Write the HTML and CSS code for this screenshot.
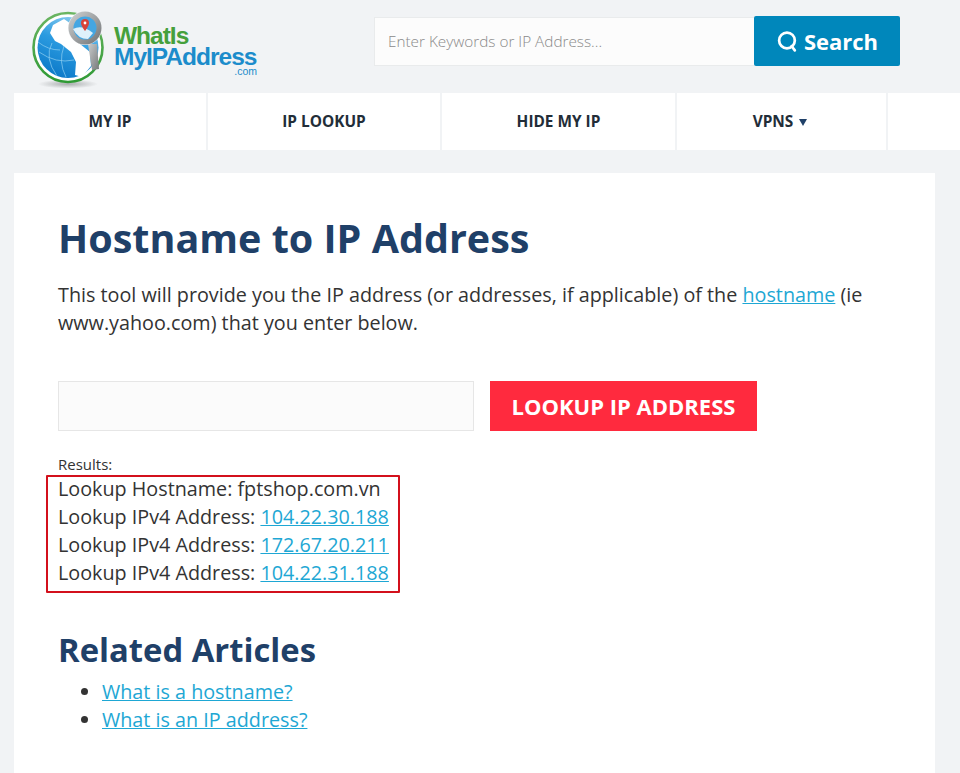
FILE: index.html
```html
<!DOCTYPE html>
<html lang="en">
<head>
<meta charset="utf-8">
<title>Hostname to IP Address</title>
<link rel="stylesheet" href="styles.css">
</head>
<body>
<header class="top">
  <a class="logo" href="#">
    <svg class="globe" width="80" height="82" viewBox="0 0 80 82">
      <defs>
        <linearGradient id="sea" x1="0.7" y1="0" x2="0.3" y2="1"><stop offset="0" stop-color="#8ccdf0"/><stop offset="0.45" stop-color="#2b9be0"/><stop offset="1" stop-color="#0b78c8"/></linearGradient>
        <linearGradient id="rim" x1="0" y1="0" x2="1" y2="1"><stop offset="0" stop-color="#c9cccd"/><stop offset="1" stop-color="#77797b"/></linearGradient>
        <linearGradient id="ring" x1="0" y1="0" x2="0" y2="1"><stop offset="0" stop-color="#6bb562"/><stop offset="1" stop-color="#2f9a35"/></linearGradient>
        <radialGradient id="shade" cx="0.5" cy="0.5" r="0.5"><stop offset="0" stop-color="#a9acae"/><stop offset="1" stop-color="#f1f3f5"/></radialGradient>
      </defs>
      <ellipse cx="40" cy="76" rx="30" ry="4.500" fill="url(#shade)"/>
      <circle cx="40" cy="39.500" r="34.500" fill="#fff"/>
      <circle cx="40" cy="39.500" r="30.500" fill="url(#sea)"/>
      <path d="M25 17 L36 11 L46 18 L46 30 L52 36 L62 44 L63 58 L54 69 L47 67 L48 54 L43 44 L33 36 L27 33 L22 25Z" fill="#fff"/>
      <path d="M11 44 Q28 56 46 52 M24 35 Q16 50 29 68 M36 38 Q30 54 38 69 M10 34 Q20 42 32 42" fill="none" stroke="#8fd0f2" stroke-width="0.700"/>
      <circle cx="40" cy="39.500" r="34.500" fill="none" stroke="url(#ring)" stroke-width="2.600"/>
      <path d="M60 36 L69 36 L71 61 L64 62Z" fill="url(#rim)"/>
      <circle cx="57" cy="20" r="17" fill="#f1f3f5"/>
      <circle cx="57" cy="20" r="14" fill="#45a6e2" stroke="url(#rim)" stroke-width="5"/>
      <path d="M45 21 Q54 16 65 25 L60 31 Q50 31 45 21Z" fill="#dff1fb"/>
      <path d="M57 11 a4 4 0 0 1 4 4 C61 18 57 23 57 23 C57 23 53 18 53 15 A4 4 0 0 1 57 11Z" fill="#d8433a"/>
      <circle cx="57" cy="15" r="1.400" fill="#fff"/>
    </svg>
    <span class="wordmark">
      <span class="wm-a">WhatIs</span>
      <span class="wm-b">MyIPAddress</span>
      <span class="wm-c">.com</span>
    </span>
  </a>
  <form class="search">
    <input class="search-input" type="text" placeholder="Enter Keywords or IP Address...">
    <button class="search-btn" type="button">
      <svg width="23" height="23" viewBox="0 0 22 22" fill="none" stroke="#fff" stroke-width="2.600" stroke-linecap="round"><circle cx="10.500" cy="10" r="7.500"/><path d="M15 15.500 L18 19.500"/></svg>
      <span>Search</span>
    </button>
  </form>
</header>
<nav class="nav">
  <a class="nav-item n1" href="#">MY IP</a>
  <a class="nav-item n2" href="#">IP LOOKUP</a>
  <a class="nav-item n3" href="#">HIDE MY IP</a>
  <a class="nav-item n4" href="#">VPNS <i class="caret"></i></a>
  <a class="nav-item n5" href="#"></a>
</nav>
<main class="card">
  <h1>Hostname to IP Address</h1>
  <p class="intro">This tool will provide you the IP address (or addresses, if applicable) of the <a href="#">hostname</a> (ie www.yahoo.com) that you enter below.</p>
  <form class="lookup">
    <input class="lookup-input" type="text">
    <button class="lookup-btn" type="button">LOOKUP IP ADDRESS</button>
  </form>
  <div class="results-label">Results:</div>
  <div class="results">
    <div class="highlight"></div>
    <div>Lookup Hostname: fptshop.com.vn</div>
    <div>Lookup IPv4 Address: <a href="#">104.22.30.188</a></div>
    <div>Lookup IPv4 Address: <a href="#">172.67.20.211</a></div>
    <div>Lookup IPv4 Address: <a href="#">104.22.31.188</a></div>
  </div>
  <h2>Related Articles</h2>
  <ul class="related">
    <li><a href="#">What is a hostname?</a></li>
    <li><a href="#">What is an IP address?</a></li>
  </ul>
</main>
</body>
</html>
```
FILE: styles.css
```css
* { box-sizing: border-box; }
html, body { margin: 0; height: 773px; overflow: hidden; }
body { background: #f1f3f5; font-family: "Open Sans", sans-serif; color: #333; }
a { color: #1ea7d4; }

.top { display: flex; height: 93px; padding-left: 28px; }
.logo { display: flex; width: 346px; padding-top: 8px; text-decoration: none; align-items: flex-start; }
.globe { flex: none; }
.wordmark { display: flex; flex-direction: column; width: 143px; margin-left: 6px; padding-top: 18px; font-family: "Liberation Sans", sans-serif; font-weight: 700; letter-spacing: -1px; }
.wm-a { color: #45a03c; font-size: 24.500px; line-height: 20px; }
.wm-b { color: #1c8ccb; font-size: 24.500px; line-height: 21px; }
.wm-c { color: #1c8ccb; font-size: 10.500px; line-height: 8px; font-weight: 400; text-align: right; letter-spacing: 0; }

.search { display: flex; padding-top: 16px; height: 66px; }
.search-input { width: 380px; margin-top: 1px; height: 49px; border: 1px solid #e9ebec; border-right: 0; background: #fcfcfc; padding: 0 13px 2px; font: 300 15.300px "Open Sans", sans-serif; outline: none; }
.search-input::placeholder { color: #8a8a8a; }
.search-btn { display: flex; align-items: center; justify-content: center; gap: 5px; width: 146px; height: 50px; border: 0; border-radius: 2px; background: #0087bb; color: #fff; font: 700 22px "Open Sans", sans-serif; padding: 0; }

.nav { display: flex; gap: 2px; height: 57px; margin-left: 14px; overflow: hidden; }
.nav-item { display: flex; align-items: center; justify-content: center; background: #fff; color: #222d38; font-weight: 700; font-size: 15.400px; text-decoration: none; flex: none; }
.n1 { width: 192px; }
.n2 { width: 232px; }
.n3 { width: 233px; }
.n4 { width: 209px; padding-right: 3px; }
.n5 { flex: 1; }
.caret { width: 0; height: 0; margin-left: 6px; margin-top: 1px; border-left: 4px solid transparent; border-right: 4px solid transparent; border-top: 7px solid #1f4068; }

.card { width: 921px; height: 620px; margin: 23px 0 0 14px; background: #fff; padding: 37px 44px 0 44px; }
h1 { margin: 0; font-size: 39.500px; line-height: 56px; font-weight: 700; color: #1f4068; }
.intro { margin: 15px 0 0; font-size: 19.750px; line-height: 28px; color: #333; }
.lookup { display: flex; gap: 16px; margin-top: 44px; }
.lookup-input { width: 416px; height: 50px; border: 1px solid #e6e6e6; background: #fbfbfb; }
.lookup-btn { width: 267px; height: 50px; border: 0; background: #ff2a3e; color: #fff; font: 700 22px "Open Sans", sans-serif; padding: 0; }
.results-label { margin-top: 22px; font-size: 15px; line-height: 22px; }
.results { position: relative; font-size: 19.750px; line-height: 28px; }
.highlight { position: absolute; left: -12px; top: 0; width: 354px; height: 118px; border: 2px solid #d3101c; border-radius: 1px; }
h2 { margin: 41px 0 0; font-size: 32.800px; line-height: 44px; font-weight: 700; color: #1f4068; }
.related { margin: 6px 0 0; padding: 0 0 0 44px; font-size: 19.750px; line-height: 28px; }
```
